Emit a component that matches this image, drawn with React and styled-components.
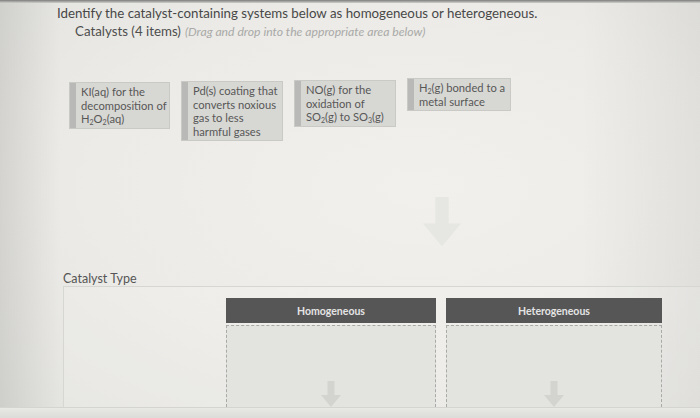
import React from "react";
import styled, { createGlobalStyle } from "styled-components";

const GlobalStyle = createGlobalStyle`
  html, body {
    margin: 0;
    padding: 0;
    background: #e6e6e3;
  }
  body {
    font-family: Lato, "Open Sans", "Liberation Sans", sans-serif;
  }
`;

const Screen = styled.div`
  position: relative;
  width: 700px;
  height: 418px;
  overflow: hidden;
  display: flex;
  flex-direction: column;
  background:
    linear-gradient(90deg, rgba(0, 0, 0, 0.09) 0px, rgba(0, 0, 0, 0) 60px),
    linear-gradient(270deg, rgba(0, 0, 0, 0.05) 0px, rgba(0, 0, 0, 0) 120px),
    radial-gradient(ellipse at 60% 45%, #f1f0ec 0%, #ecebe7 55%, #e2e2df 100%);
`;

const TopEdge = styled.div`
  height: 3px;
  flex: none;
  background: linear-gradient(180deg, #7d7d7b, #cfcfcc);
`;

const Prompt = styled.h1`
  margin: 2px 0 0 57px;
  font-size: 13.3px;
  font-weight: 400;
  color: #484848;
  line-height: 16px;
`;

const Subhead = styled.div`
  margin: 2px 0 0 75px;
  font-size: 13.3px;
  color: #4e4e4e;
  line-height: 16px;
`;

const Hint = styled.span`
  font-size: 12.2px;
  font-style: italic;
  color: #a9a9a7;
  margin-left: 4px;
`;

const CardRow = styled.div`
  display: flex;
  align-items: flex-start;
  gap: 11px;
  margin: 40px 0 0 69px;
  height: 68px;
`;

const Card = styled.div`
  align-self: flex-start;
  width: ${(p) => p.$w || 101}px;
  margin-top: ${(p) => p.$shift || 0}px;
  box-sizing: border-box;
  display: flex;
  background: #d7d7d4;
  border: 1px solid #c9c9c6;
`;

const Grip = styled.div`
  width: 6px;
  flex: none;
  background: #b9b9b7;
`;

const CardText = styled.div`
  padding: 2px 3px 2px 5px;
  font-size: 11.2px;
  line-height: 13.5px;
  color: #575757;
  white-space: nowrap;

  sub {
    font-size: 7px;
    line-height: 0;
    vertical-align: -2px;
  }
`;

const ArrowZone = styled.div`
  height: 123px;
  padding: 49px 0 0 423px;
  box-sizing: border-box;
`;

const SectionLabel = styled.div`
  margin: 0 0 0 63px;
  font-size: 12.5px;
  color: #555;
  line-height: 15px;
  height: 15px;
`;

const Board = styled.div`
  flex: 1;
  margin-left: 63px;
  margin-right: -10px;
  border: 1px solid #d6d6d3;
  border-bottom: none;
  background: rgba(255, 255, 255, 0.12);
  display: grid;
  grid-template-columns: 152px 210px 216px;
  column-gap: 10px;
  padding-top: 11px;
  min-height: 0;
`;

const Bin = styled.div`
  display: flex;
  flex-direction: column;
  min-height: 0;
`;

const BinHeader = styled.div`
  height: 25px;
  flex: none;
  display: flex;
  align-items: center;
  justify-content: center;
  background: #565656;
  color: #e4e4e4;
  font-size: 10.5px;
  font-weight: 700;
`;

const DropArea = styled.div`
  flex: 1;
  margin-top: 2px;
  border: 1px dashed #a9a9a7;
  border-bottom: none;
  background: #e3e3e0;
  display: flex;
  justify-content: center;
  align-items: flex-end;
  overflow: hidden;
`;

const BottomEdge = styled.div`
  height: 10px;
  flex: none;
  border-top: 1px solid #d4d4d1;
  background: linear-gradient(180deg, #e8e8e5, #dcdcd9);
`;

const DownArrow = ({ size, color }) => (
  <svg width={size} height={size * 1.3} viewBox="0 0 40 52" fill={color}>
    <path d="M13 0 H27 V28 H40 L20 52 L0 28 H13 Z" />
  </svg>
);

const cards = [
  {
    w: 101,
    shift: 2,
    lines: [
      "KI(aq) for the",
      "decomposition of",
      <>
        H<sub>2</sub>O<sub>2</sub>(aq)
      </>,
    ],
  },
  {
    w: 102,
    shift: 1,
    lines: ["Pd(s) coating that", "converts noxious", "gas to less", "harmful gases"],
  },
  {
    w: 102,
    shift: 0,
    lines: [
      "NO(g) for the",
      "oxidation of",
      <>
        SO<sub>2</sub>(g) to SO<sub>3</sub>(g)
      </>,
    ],
  },
  {
    w: 104,
    shift: -2,
    lines: [
      <>
        H<sub>2</sub>(g) bonded to a
      </>,
      "metal surface",
    ],
  },
];

const App = () => {
  return (
    <>
      <GlobalStyle />
      <Screen>
        <TopEdge />
        <Prompt>
          Identify the catalyst-containing systems below as homogeneous or heterogeneous.
        </Prompt>
        <Subhead>
          Catalysts (4 items)
          <Hint>(Drag and drop into the appropriate area below)</Hint>
        </Subhead>
        <CardRow>
          {cards.map((card, i) => (
            <Card key={i} $w={card.w} $shift={card.shift}>
              <Grip />
              <CardText>
                {card.lines.map((line, j) => (
                  <div key={j}>{line}</div>
                ))}
              </CardText>
            </Card>
          ))}
        </CardRow>
        <ArrowZone>
          <DownArrow size={38} color="#e6e6e2" />
        </ArrowZone>
        <SectionLabel>Catalyst Type</SectionLabel>
        <Board>
          <div />
          <Bin>
            <BinHeader>Homogeneous</BinHeader>
            <DropArea>
              <DownArrow size={20} color="#d3d3d0" />
            </DropArea>
          </Bin>
          <Bin>
            <BinHeader>Heterogeneous</BinHeader>
            <DropArea>
              <DownArrow size={20} color="#d3d3d0" />
            </DropArea>
          </Bin>
        </Board>
        <BottomEdge />
      </Screen>
    </>
  );
};

export default App;
